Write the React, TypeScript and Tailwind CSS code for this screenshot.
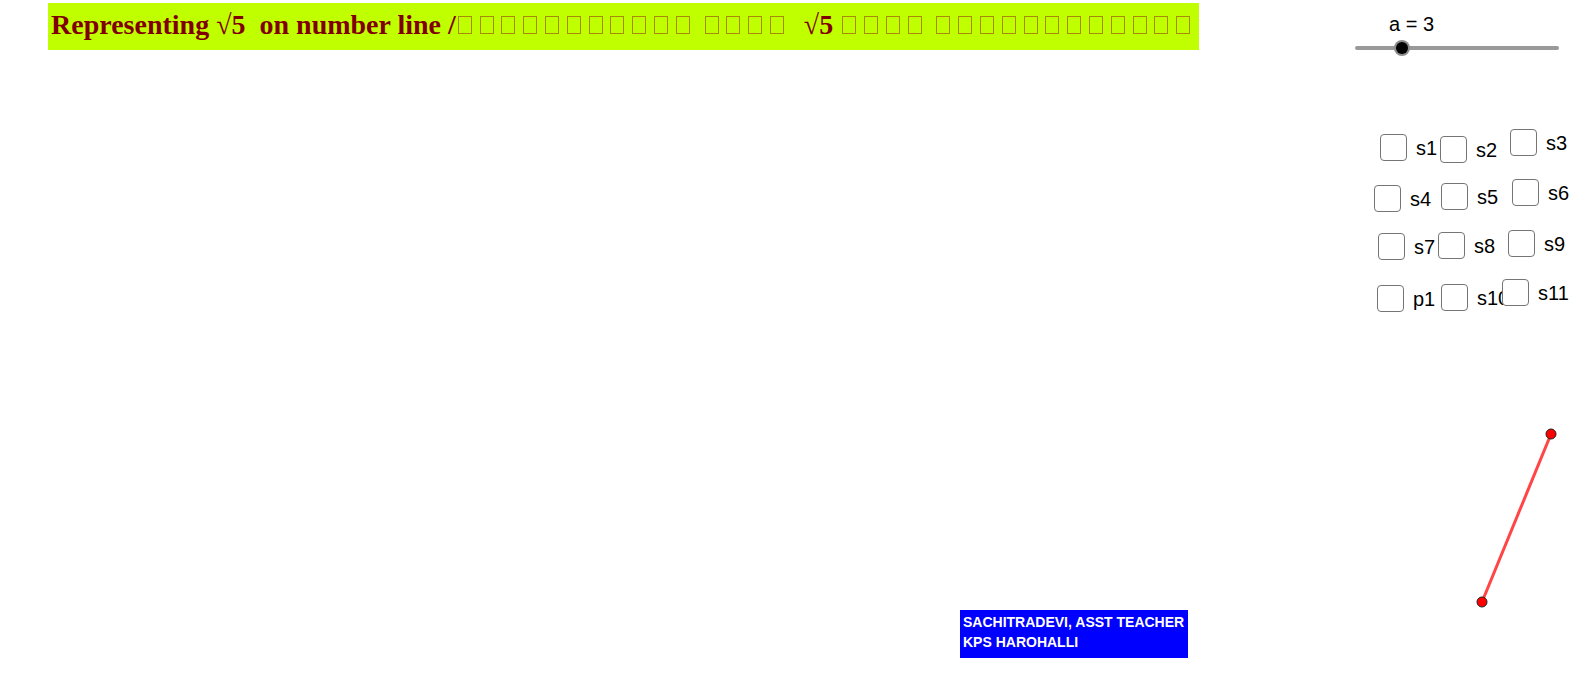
import React from "react";

function Tofu({ n }: { n: number }) {
  return (
    <>
      {Array.from({ length: n }).map((_, i) => (
        <span
          key={i}
          className="inline-block w-[14px] h-[18px] border border-[#a88a08] ml-[2px] mr-[5.8px] align-baseline"
        />
      ))}
    </>
  );
}

type CB = { label: string; x: number; y: number };

const boxes: CB[] = [
  { label: "s1", x: 1380, y: 132 },
  { label: "s2", x: 1440, y: 134 },
  { label: "s3", x: 1510, y: 127 },
  { label: "s4", x: 1374, y: 183 },
  { label: "s5", x: 1441, y: 181 },
  { label: "s6", x: 1512, y: 177 },
  { label: "s7", x: 1378, y: 231 },
  { label: "s8", x: 1438, y: 230 },
  { label: "s9", x: 1508, y: 228 },
  { label: "p1", x: 1377, y: 283 },
  { label: "s10", x: 1441, y: 282 },
  { label: "s11", x: 1502, y: 277 },
];

export default function App() {
  return (
    <div className="relative w-full h-[675px] overflow-hidden bg-white font-['Liberation_Sans',Arial,sans-serif]">
      {/* Title */}
      <div className="absolute left-[48px] top-[3px] w-[1151px] h-[47px] bg-[#c0ff00] pl-[3px] whitespace-pre font-['Liberation_Serif','Times_New_Roman',serif] font-bold text-[28px] leading-[43px] text-[#800000]">
        {"Representing √5  on number line /"}
        <Tofu n={11} />
        {" "}
        <Tofu n={4} />
        {"  √5 "}
        <Tofu n={4} />
        {" "}
        <Tofu n={12} />
      </div>

      {/* Slider */}
      <div className="absolute left-[1389px] top-[12px] text-[20px] leading-[24px] text-black whitespace-pre">
        a = 3
      </div>
      <div className="absolute left-[1355px] top-[46px] w-[204px] h-[4px] rounded-full bg-[#999999]" />
      <div className="absolute left-[1394px] top-[40px] w-[16px] h-[16px] rounded-full bg-[#8c8c8c] flex items-center justify-center">
        <div className="w-[12px] h-[12px] rounded-full bg-black" />
      </div>

      {/* Checkboxes */}
      {boxes.map((b) => (
        <div
          key={b.label}
          className="absolute flex items-center gap-[9px]"
          style={{ left: b.x, top: b.y }}
        >
          <div className="w-[27px] h-[27px] rounded-[4px] border border-[#757575] bg-white" />
          <span className="text-[20px] leading-[27px] text-black pt-[3px]">{b.label}</span>
        </div>
      ))}

      {/* Segment */}
      <svg className="absolute left-0 top-0" width="1573" height="675">
        <line x1="1551" y1="434" x2="1482" y2="602" stroke="#ff4545" strokeWidth="3" />
        <circle cx="1551" cy="434" r="5" fill="#ff0000" stroke="#222" strokeWidth="1" />
        <circle cx="1482" cy="602" r="5" fill="#ff0000" stroke="#222" strokeWidth="1" />
      </svg>

      {/* Credit */}
      <div className="absolute left-[960px] top-[610px] w-[228px] h-[48px] bg-[#0000ff] pl-[3px] pt-[2px] text-white font-bold text-[14px] leading-[20px]">
        <div>SACHITRADEVI, ASST TEACHER</div>
        <div>KPS HAROHALLI</div>
      </div>
    </div>
  );
}
